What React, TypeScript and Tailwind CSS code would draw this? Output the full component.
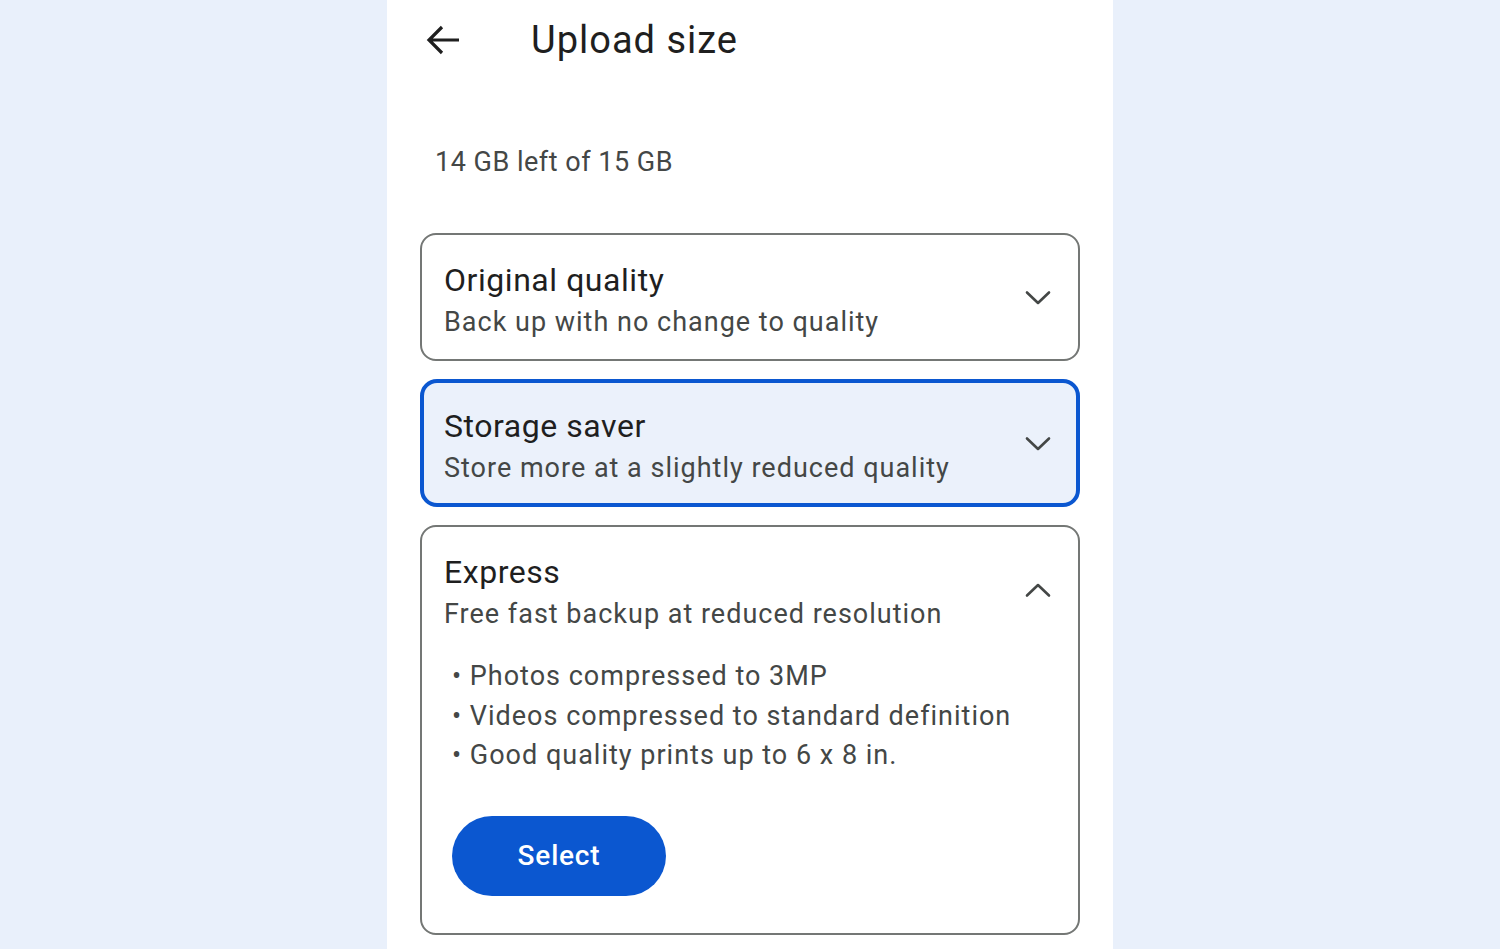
import React from "react";

const Chevron = ({ up = false }: { up?: boolean }) => (
  <svg width="26" height="16" viewBox="0 0 26 16" className="shrink-0">
    <path
      d={up ? "M2 13.5 L13 3 L24 13.5" : "M2 2.5 L13 13 L24 2.5"}
      fill="none"
      stroke="#444746"
      strokeWidth="2.6"
      strokeLinecap="round"
      strokeLinejoin="round"
    />
  </svg>
);

const BackArrow = () => (
  <svg width="36" height="32" viewBox="0 0 36 32">
    <path
      d="M34 16 H4 M17 3 L4 16 L17 29"
      fill="none"
      stroke="#1f1f1f"
      strokeWidth="3.2"
      strokeLinecap="butt"
      strokeLinejoin="miter"
    />
  </svg>
);

export default function App() {
  const font = { fontFamily: "Roboto, 'Open Sans', sans-serif" };
  return (
    <div className="w-full h-[949px] bg-[#e9f0fb] flex justify-center overflow-hidden" style={font}>
      <div className="w-[726px] h-full bg-white flex flex-col">
        {/* header */}
        <div className="h-[80px] flex items-center pl-[38px]">
          <BackArrow />
          <div className="ml-[70px] text-[38px] tracking-[1px] text-[#1f1f1f] leading-none">Upload size</div>
        </div>
        <div className="pl-[48px] mt-[65px] text-[27px] tracking-[0.5px] text-[#444746] leading-[34px]">14 GB left of 15 GB</div>

        <div className="mt-[54px] px-[33px] flex flex-col gap-[18px]">
          {/* card 1 */}
          <div className="h-[128px] border-2 border-[#747775] rounded-[16px] pl-[22px] pr-[27px] pt-[8px] flex items-center">
            <div className="flex-1 flex flex-col">
              <div className="text-[32px] leading-[42px] tracking-[0.55px] text-[#1f1f1f]">Original quality</div>
              <div className="text-[27px] leading-[42px] tracking-[1px] text-[#444746]">Back up with no change to quality</div>
            </div>
            <div className="-mt-[6px]"><Chevron /></div>
          </div>
          {/* card 2 */}
          <div className="h-[128px] border-4 border-[#0b57d0] bg-[#ebf1fb] rounded-[17px] pl-[20px] pr-[25px] pt-[8px] flex items-center">
            <div className="flex-1 flex flex-col">
              <div className="text-[32px] leading-[42px] tracking-[0.55px] text-[#1f1f1f]">Storage saver</div>
              <div className="text-[27px] leading-[42px] tracking-[1px] text-[#444746]">Store more at a slightly reduced quality</div>
            </div>
            <div className="-mt-[6px]"><Chevron /></div>
          </div>
          {/* card 3 */}
          <div className="h-[410px] border-2 border-[#747775] rounded-[16px] pl-[22px] pr-[27px] pt-[24px] flex flex-col">
            <div className="flex items-center">
              <div className="flex-1 flex flex-col">
                <div className="text-[32px] leading-[42px] tracking-[0.55px] text-[#1f1f1f]">Express</div>
                <div className="text-[27px] leading-[42px] tracking-[1px] text-[#444746]">Free fast backup at reduced resolution</div>
              </div>
              <div className="-mt-[6px]"><Chevron up /></div>
            </div>
            <div className="mt-[22px] pl-[8px] flex flex-col text-[27px] leading-[39.5px] tracking-[1px] text-[#444746]">
              <div>• Photos compressed to 3MP</div>
              <div>• Videos compressed to standard definition</div>
              <div>• Good quality prints up to 6 x 8 in.</div>
            </div>
            <button className="mt-[40px] ml-[8px] w-[214px] h-[80px] rounded-full bg-[#0b57d0] text-white text-[28px] tracking-[0.8px] font-medium flex items-center justify-center">
              Select
            </button>
          </div>
        </div>
      </div>
    </div>
  );
}
